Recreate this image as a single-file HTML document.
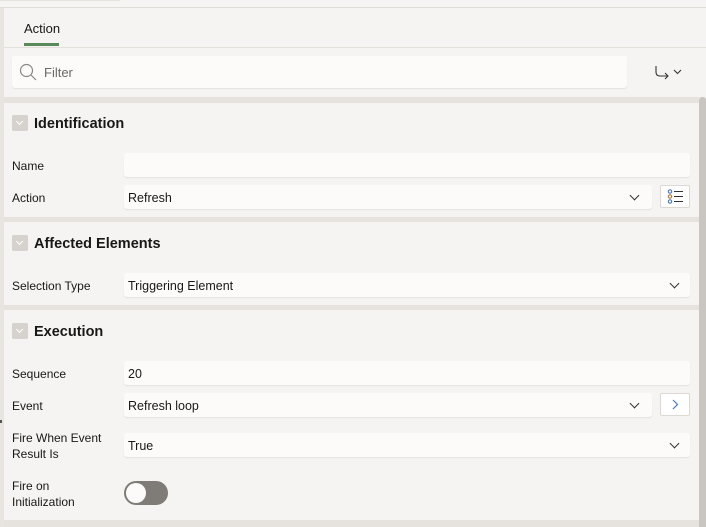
<!DOCTYPE html>
<html><head><meta charset="utf-8"><style>
*{box-sizing:border-box;margin:0;padding:0}
body{width:706px;height:527px;overflow:hidden;background:#f5f4f2;font-family:"Liberation Sans",sans-serif;color:#1a1816;position:relative;font-size:12px}
.a{position:absolute}
.inp{position:absolute;background:#fcfbfa;border-radius:3px;box-shadow:0 1px 1px rgba(0,0,0,.08);font-size:12.5px;line-height:26px;padding-left:4px}
.lbl{position:absolute;left:12px;font-size:12px;line-height:16px}
.hd{position:absolute;left:12px;height:17px;font-size:14.5px;font-weight:bold;line-height:19px}
.hd i{display:inline-block;width:16px;height:16px;background:#d6d2ce;border-radius:2px;vertical-align:top;margin-right:6px;position:relative}
.hd i:after{content:"";position:absolute;left:5px;top:4px;width:4px;height:4px;border-right:1px solid #fff;border-bottom:1px solid #fff;transform:rotate(45deg)}
.sep{position:absolute;left:4px;width:695px;height:5px;background:#e6e3df}
.chev{position:absolute;width:7px;height:7px;border-right:1.3px solid #333;border-bottom:1.3px solid #333;transform:rotate(45deg)}
.btn{position:absolute;left:660px;width:30px;height:23px;background:#fff;border:1px solid #dcd8d4;border-radius:2px}
</style></head><body>
<div class="a" style="left:0;top:0;width:120px;height:1px;background:#e6e3df"></div>
<div class="a" style="left:0;top:7px;width:706px;height:1px;background:#e0ddd9"></div>
<div class="a" style="left:0;top:8px;width:4px;height:519px;background:#e8e5e1"></div>
<div class="a" style="left:24px;top:21px;font-size:13px">Action</div>
<div class="a" style="left:24px;top:43px;width:35px;height:3px;background:#5a8a5a"></div>
<div class="a" style="left:4px;top:47px;width:702px;height:1px;background:#e3e0dc"></div>
<div class="inp" style="left:12px;top:56px;width:615px;height:32px;line-height:33px;padding-left:32px;color:#6b6864;font-size:13px">Filter</div>
<svg class="a" style="left:19px;top:63px" width="18" height="18"><circle cx="7.5" cy="7.5" r="6" fill="none" stroke="#888" stroke-width="1.2"/><path d="M12 12l5 5" stroke="#888" stroke-width="1.2"/></svg>
<svg class="a" style="left:654px;top:64px" width="32" height="16"><path d="M2 2v6q0 4 4 4h8M11 9l3 3-3 3" fill="none" stroke="#333" stroke-width="1.1"/><path d="M20 6l3.5 3.5L27 6" fill="none" stroke="#333" stroke-width="1.1"/></svg>
<div class="sep" style="top:97px;height:6px"></div>
<div class="a" style="left:699px;top:97px;width:7px;height:430px;background:#c9c5c1;border-radius:3px 3px 0 0"></div>

<div class="hd" style="top:115px"><i></i>Identification</div>
<div class="lbl" style="top:158px">Name</div>
<div class="inp" style="left:124px;top:153px;width:566px;height:24px"></div>
<div class="lbl" style="top:190px">Action</div>
<div class="inp" style="left:124px;top:185px;width:528px;height:24px">Refresh</div>
<div class="chev" style="left:631px;top:192px"></div>
<div class="btn" style="top:185px"><svg width="28" height="21"><g fill="none" stroke-width="1.1"><circle cx="9" cy="5.5" r="1.7" stroke="#4a78c0"/><circle cx="9" cy="10.5" r="1.7" stroke="#c07a30"/><circle cx="9" cy="15.5" r="1.7" stroke="#4a78c0"/><path d="M13 5.5h9M13 10.5h9M13 15.5h9" stroke="#333"/></g></svg></div>
<div class="sep" style="top:217px"></div>

<div class="hd" style="top:235px"><i></i>Affected Elements</div>
<div class="lbl" style="top:278px">Selection Type</div>
<div class="inp" style="left:124px;top:273px;width:566px;height:24px">Triggering Element</div>
<div class="chev" style="left:671px;top:280px"></div>
<div class="sep" style="top:305px"></div>

<div class="hd" style="top:323px"><i></i>Execution</div>
<div class="lbl" style="top:366px">Sequence</div>
<div class="inp" style="left:124px;top:361px;width:566px;height:24px">20</div>
<div class="lbl" style="top:398px">Event</div>
<div class="inp" style="left:124px;top:393px;width:528px;height:24px">Refresh loop</div>
<div class="chev" style="left:631px;top:400px"></div>
<div class="btn" style="top:393px"><svg width="28" height="21"><path d="M12 6l4.5 4.5L12 15" fill="none" stroke="#4a78c0" stroke-width="1.2"/></svg></div>
<div class="lbl" style="top:430px">Fire When Event<br>Result Is</div>
<div class="inp" style="left:124px;top:433px;width:566px;height:24px">True</div>
<div class="chev" style="left:671px;top:440px"></div>
<div class="lbl" style="top:478px">Fire on<br>Initialization</div>
<div class="a" style="left:124px;top:481px;width:44px;height:24px;border-radius:12px;background:#7f7b77"></div>
<div class="a" style="left:126px;top:483px;width:20px;height:20px;border-radius:10px;background:#fcfbfa"></div>
<div class="sep" style="top:520px;height:7px"></div>
<div class="a" style="left:0;top:420px;width:2px;height:3px;background:#555"></div>
</body></html>
